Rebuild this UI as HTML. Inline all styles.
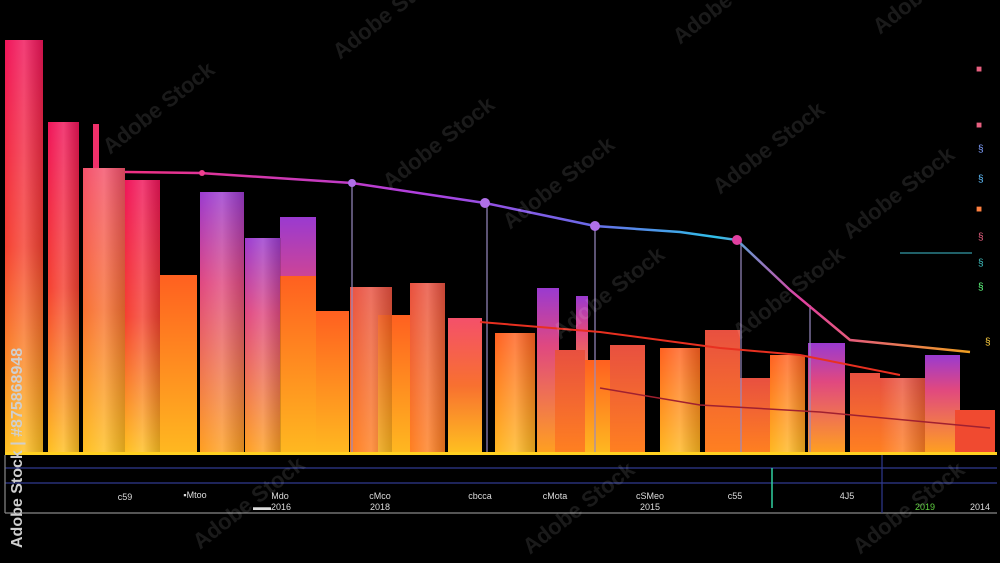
<!DOCTYPE html>
<html><head><meta charset="utf-8"><style>
html,body{margin:0;padding:0;background:#000;width:1000px;height:563px;overflow:hidden;font-family:"Liberation Sans",sans-serif}
</style></head><body>
<svg width="1000" height="563" viewBox="0 0 1000 563" xmlns="http://www.w3.org/2000/svg">
<defs>
<linearGradient id="gA" x1="0" y1="0" x2="0" y2="1"><stop offset="0" stop-color="#f0145a"/><stop offset="0.5" stop-color="#f54030"/><stop offset="1" stop-color="#ffc020"/></linearGradient>
<linearGradient id="gB" x1="0" y1="0" x2="0" y2="1"><stop offset="0" stop-color="#f4506a"/><stop offset="0.5" stop-color="#f87030"/><stop offset="1" stop-color="#ffc020"/></linearGradient>
<linearGradient id="gC" x1="0" y1="0" x2="0" y2="1"><stop offset="0" stop-color="#ff6020"/><stop offset="1" stop-color="#ffb820"/></linearGradient>
<linearGradient id="gP" x1="0" y1="0" x2="0" y2="1"><stop offset="0" stop-color="#9a3ad0"/><stop offset="0.35" stop-color="#e04880"/><stop offset="1" stop-color="#ffa020"/></linearGradient>
<linearGradient id="gR" x1="0" y1="0" x2="0" y2="1"><stop offset="0" stop-color="#e85040"/><stop offset="1" stop-color="#ff8020"/></linearGradient>
<linearGradient id="gS" x1="0" y1="0" x2="1" y2="0"><stop offset="0" stop-color="#fff" stop-opacity="0"/><stop offset="0.5" stop-color="#fff" stop-opacity="0.18"/><stop offset="1" stop-color="#000" stop-opacity="0.15"/></linearGradient>
<linearGradient id="gL" x1="0" y1="0" x2="1" y2="0"><stop offset="0" stop-color="#f03080"/><stop offset="0.35" stop-color="#b040e0"/><stop offset="0.55" stop-color="#6a6ae8"/><stop offset="0.7" stop-color="#30c0e8"/><stop offset="0.8" stop-color="#e040a0"/><stop offset="1" stop-color="#f0a020"/></linearGradient>
</defs>
<g>
<rect x="5" y="40" width="38" height="413" fill="url(#gA)"/>
<rect x="48" y="122" width="31" height="331" fill="url(#gA)"/>
<rect x="93" y="124" width="6" height="50" fill="#f0306a"/>
<rect x="83" y="168" width="42" height="285" fill="url(#gB)"/>
<rect x="125" y="180" width="35" height="273" fill="url(#gA)"/>
<rect x="160" y="275" width="37" height="178" fill="url(#gC)"/>
<rect x="200" y="192" width="44" height="261" fill="url(#gP)"/>
<rect x="245" y="238" width="36" height="215" fill="url(#gP)"/>
<rect x="280" y="217" width="36" height="236" fill="url(#gP)"/>
<rect x="280" y="276" width="36" height="177" fill="url(#gC)"/>
<rect x="316" y="311" width="33" height="142" fill="url(#gC)"/>
<rect x="350" y="287" width="42" height="166" fill="url(#gR)"/>
<rect x="378" y="315" width="32" height="138" fill="url(#gC)"/>
<rect x="410" y="283" width="35" height="170" fill="url(#gR)"/>
<rect x="448" y="318" width="34" height="135" fill="url(#gB)"/>
<rect x="495" y="333" width="40" height="120" fill="url(#gC)"/>
<rect x="537" y="288" width="22" height="165" fill="url(#gP)"/>
<rect x="576" y="296" width="12" height="100" fill="url(#gP)"/>
<rect x="555" y="350" width="30" height="103" fill="url(#gR)"/>
<rect x="585" y="360" width="25" height="93" fill="url(#gC)"/>
<rect x="610" y="345" width="35" height="108" fill="url(#gR)"/>
<rect x="660" y="348" width="40" height="105" fill="url(#gC)"/>
<rect x="705" y="330" width="35" height="123" fill="url(#gR)"/>
<rect x="740" y="378" width="30" height="75" fill="url(#gR)"/>
<rect x="770" y="355" width="35" height="98" fill="url(#gC)"/>
<rect x="808" y="343" width="37" height="110" fill="url(#gP)"/>
<rect x="850" y="373" width="30" height="80" fill="url(#gR)"/>
<rect x="880" y="378" width="45" height="75" fill="url(#gR)"/>
<rect x="925" y="355" width="35" height="98" fill="url(#gP)"/>
<rect x="955" y="410" width="40" height="43" fill="#f04a30"/>
</g>
<g fill="url(#gS)">
<rect x="5" y="40" width="38" height="413"/><rect x="48" y="122" width="31" height="331"/><rect x="83" y="168" width="42" height="285"/><rect x="125" y="180" width="35" height="273"/><rect x="200" y="192" width="44" height="261"/><rect x="245" y="238" width="36" height="215"/><rect x="350" y="287" width="42" height="166"/><rect x="410" y="283" width="35" height="170"/><rect x="495" y="333" width="40" height="120"/><rect x="660" y="348" width="40" height="105"/><rect x="770" y="355" width="35" height="98"/><rect x="880" y="378" width="45" height="75"/>
</g>
<g stroke="#9a8ac0" stroke-width="1.2">
<line x1="352" y1="183" x2="352" y2="455"/><line x1="487" y1="204" x2="487" y2="455"/><line x1="595" y1="226" x2="595" y2="455"/><line x1="741" y1="241" x2="741" y2="455"/><line x1="810" y1="305" x2="810" y2="455"/>
</g>
<polyline points="125,172 200,173 352,183 485,203 595,226 680,232 737,240 790,290 850,340 970,352" fill="none" stroke="url(#gL)" stroke-width="2.5"/>
<polyline points="480,322 600,332 720,348 800,355 900,375" fill="none" stroke="#e83020" stroke-width="2"/>
<polyline points="600,388 700,405 820,412 990,428" fill="none" stroke="#a02030" stroke-width="1.5"/>
<g fill="#b070e8"><circle cx="352" cy="183" r="4"/><circle cx="485" cy="203" r="5"/><circle cx="595" cy="226" r="5"/><circle cx="737" cy="240" r="5" fill="#e040a0"/><circle cx="202" cy="173" r="3" fill="#f04090"/></g>
<rect x="5" y="452" width="992" height="3" fill="#ffd020"/>
<g stroke="#303a90" stroke-width="1.2" fill="none">
<line x1="5" y1="468" x2="997" y2="468"/><line x1="5" y1="483" x2="997" y2="483"/><line x1="5" y1="513" x2="997" y2="513" stroke="#888"/>
<line x1="5" y1="455" x2="5" y2="513" stroke="#888"/><line x1="882" y1="455" x2="882" y2="513"/>
</g>
<line x1="772" y1="468" x2="772" y2="508" stroke="#30d0a0" stroke-width="1.5"/>
<g font-size="9" fill="#ddd" text-anchor="middle">
<text x="125" y="500">ᴄ59</text><text x="195" y="498">▪Mtoo</text><text x="280" y="499">Mdo</text><text x="380" y="499">cMco</text><text x="480" y="499">cbcca</text><text x="555" y="499">cMota</text><text x="650" y="499">cSMeo</text><text x="735" y="499">c55</text><text x="847" y="499">4J5</text>
<text x="272" y="510">▬▬2016</text><text x="380" y="510">2018</text><text x="650" y="510">2015</text><text x="925" y="510" fill="#60d040">2019</text><text x="980" y="510">2014</text>
</g>
<g font-size="10" fill="#e86080"><text x="976" y="72">■</text><text x="976" y="128">■</text><text x="978" y="152" fill="#80a0ff">§</text><text x="978" y="182" fill="#60c0ff">§</text><text x="976" y="212" fill="#ff8040">■</text><text x="978" y="240">§</text><text x="978" y="266" fill="#40c0c0">§</text><text x="978" y="290" fill="#60ff80">§</text><text x="985" y="345" fill="#ffd040">§</text></g>
<line x1="900" y1="253" x2="972" y2="253" stroke="#40c0d0"/>
<text x="22" y="548" transform="rotate(-90 22 548)" font-size="16" font-weight="bold" fill="#cfcfcf">Adobe Stock | #875868948</text>
<g font-size="22" font-weight="bold" fill="#fff" fill-opacity="0.1">
<text transform="translate(110 155) rotate(-38)">Adobe Stock</text><text transform="translate(340 60) rotate(-38)">Adobe Stock</text><text transform="translate(390 190) rotate(-38)">Adobe Stock</text><text transform="translate(510 230) rotate(-38)">Adobe Stock</text><text transform="translate(720 195) rotate(-38)">Adobe Stock</text><text transform="translate(850 240) rotate(-38)">Adobe Stock</text><text transform="translate(560 340) rotate(-38)">Adobe Stock</text><text transform="translate(740 340) rotate(-38)">Adobe Stock</text><text transform="translate(200 550) rotate(-38)">Adobe Stock</text><text transform="translate(530 555) rotate(-38)">Adobe Stock</text><text transform="translate(860 555) rotate(-38)">Adobe Stock</text><text transform="translate(680 45) rotate(-38)">Adobe Stock</text><text transform="translate(880 35) rotate(-38)">Adobe Stock</text>
</g>
</svg>
</body></html>
